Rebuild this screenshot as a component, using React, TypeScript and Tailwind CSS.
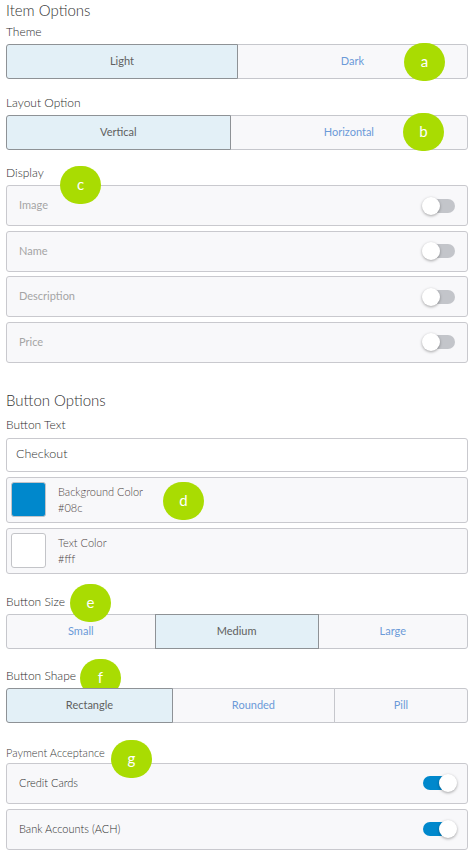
import React from "react";

function Label({ children, className = "" }: { children: React.ReactNode; className?: string }) {
  return <div className={"text-[12px] leading-[16px] text-[#2e2e2e] " + className}>{children}</div>;
}

function Segmented({ options, selected }: { options: string[]; selected: string }) {
  const last = options.length - 1;
  return (
    <div className="flex h-[35px] mt-[4px]">
      {options.map((o, i) => {
        const sel = o === selected;
        return (
          <div
            key={o}
            className={[
              "flex-auto flex items-center justify-center border text-[11px] font-normal",
              i > 0 ? "-ml-px" : "",
              i === 0 ? "rounded-l-[3px]" : "",
              i === last ? "rounded-r-[3px]" : "",
              sel
                ? "relative z-10 bg-[#e3f0f7] border-[#8e9296] text-[#606060]"
                : "bg-[#f8f8fa] border-[#c6c7cc] text-[#6b9ad8]",
            ].join(" ")}
          >
            {o}
          </div>
        );
      })}
    </div>
  );
}

function Toggle({ on }: { on: boolean }) {
  return (
    <div
      className={
        "w-[32px] h-[14px] rounded-full flex items-center " +
        (on ? "bg-[#0088cc] justify-end" : "bg-[#c3c5ca] justify-start")
      }
    >
      <div
        className={
          "w-[18px] h-[18px] rounded-full bg-white shadow-[0_1px_3px_rgba(0,0,0,0.35)] " +
          (on ? "mr-[-2px]" : "ml-[-1px]")
        }
      />
    </div>
  );
}

function ToggleRow({ label, on, dark }: { label: string; on: boolean; dark?: boolean }) {
  return (
    <div className="h-[41px] flex items-center justify-between border border-[#c9c9ce] rounded-[3px] bg-[#f8f8fa] pl-[12px] pr-[12px]">
      <span className={"text-[11px] " + (dark ? "font-light text-[#2e2e2e]" : "font-normal text-[#a5a5a5]")}>{label}</span>
      <Toggle on={on} />
    </div>
  );
}

function ColorRow({ label, value, swatch }: { label: string; value: string; swatch: string }) {
  return (
    <div className="h-[46px] flex items-center border border-[#c9c9ce] rounded-[3px] bg-[#f8f8fa] pl-[4px]">
      <div className={"w-[35px] h-[35px] rounded-[3px] border border-[#c3c4c8] " + swatch} />
      <div className="ml-[12px] flex flex-col text-[11px] leading-[16px] text-[#4e4444]">
        <span>{label}</span>
        <span>{value}</span>
      </div>
    </div>
  );
}

function Badge({ letter, className }: { letter: string; className: string }) {
  return (
    <div
      className={
        "absolute w-[41px] h-[38px] rounded-full bg-[#a9dc02] flex items-center justify-center text-white text-[15px] font-normal leading-none pb-[2px] " +
        className
      }
    >
      {letter}
    </div>
  );
}

export default function App() {
  return (
    <div className="relative w-[475px] min-h-[861px] bg-white font-light font-['Lato','Open_Sans',sans-serif]">
      <div className="ml-[6px] w-[462px] flex flex-col">
        <div className="text-[15px] leading-[20px] text-[#333333]">Item Options</div>

        <Label className="mt-[4px]">Theme</Label>
        <Segmented options={["Light", "Dark"]} selected="Light" />

        <Label className="mt-[16px]">Layout Option</Label>
        <Segmented options={["Vertical", "Horizontal"]} selected="Vertical" />

        <Label className="mt-[15px]">Display</Label>
        <div className="mt-[4px] flex flex-col gap-[4.5px]">
          <ToggleRow label="Image" on={false} />
          <ToggleRow label="Name" on={false} />
          <ToggleRow label="Description" on={false} />
          <ToggleRow label="Price" on={false} />
        </div>

        <div className="mt-[27px] text-[15px] leading-[20px] text-[#333333]">Button Options</div>

        <Label className="mt-[7px]">Button Text</Label>
        <div className="mt-[5px] h-[34px] flex items-center border border-[#c9c9ce] rounded-[3px] bg-white pl-[9px] text-[12.5px] text-[#333333]">
          Checkout
        </div>
        <div className="mt-[5px] flex flex-col gap-[5px]">
          <ColorRow label="Background Color" value="#08c" swatch="bg-[#0088cc]" />
          <ColorRow label="Text Color" value="#fff" swatch="bg-white" />
        </div>

        <Label className="mt-[20px]">Button Size</Label>
        <Segmented options={["Small", "Medium", "Large"]} selected="Medium" />

        <Label className="mt-[19px]">Button Shape</Label>
        <Segmented options={["Rectangle", "Rounded", "Pill"]} selected="Rectangle" />

        <div className="mt-[22px] text-[11px] leading-[16px] text-[#3a3a3a]">Payment Acceptance</div>
        <div className="mt-[2px] flex flex-col gap-[5px]">
          <ToggleRow label="Credit Cards" on={true} dark />
          <ToggleRow label="Bank Accounts (ACH)" on={true} dark />
        </div>
      </div>

      <Badge letter="a" className="left-[404px] top-[43px]" />
      <Badge letter="b" className="left-[403px] top-[113px]" />
      <Badge letter="c" className="left-[60px] top-[166px] text-[13px]" />
      <Badge letter="d" className="left-[163px] top-[482px]" />
      <Badge letter="e" className="left-[70px] top-[584px]" />
      <Badge letter="f" className="left-[80px] top-[659px]" />
      <Badge letter="g" className="left-[111px] top-[740px]" />
    </div>
  );
}
